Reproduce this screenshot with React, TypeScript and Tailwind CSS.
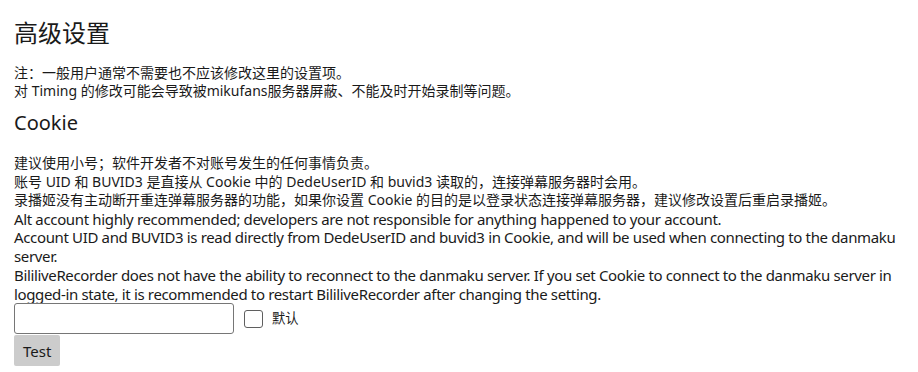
import { useState } from "react";

const AdvancedSettings = () => {
  const [cookie, setCookie] = useState("");
  const [useDefault, setUseDefault] = useState(false);

  return (
    <div
      className="min-h-screen bg-white px-[14px] pt-[17px] text-[#1a1a1a]"
      style={{ fontFamily: '"Noto Sans", "Noto Sans CJK SC", sans-serif' }}
    >
      <h1 className="text-[24px] leading-[32px] font-normal">高级设置</h1>

      <div className="mt-[15px] text-[14px] leading-[18px]">
        <div>注：一般用户通常不需要也不应该修改这里的设置项。</div>
        <div>对 Timing 的修改可能会导致被mikufans服务器屏蔽、不能及时开始录制等问题。</div>
      </div>

      <h2 className="mt-[9px] text-[20px] leading-[28px] font-normal">Cookie</h2>

      <div className="mt-[17px] pr-[4px]">
        <div className="text-[14px] leading-[18.5px]">
          <div>建议使用小号；软件开发者不对账号发生的任何事情负责。</div>
          <div>账号 UID 和 BUVID3 是直接从 Cookie 中的 DedeUserID 和 buvid3 读取的，连接弹幕服务器时会用。</div>
          <div>录播姬没有主动断开重连弹幕服务器的功能，如果你设置 Cookie 的目的是以登录状态连接弹幕服务器，建议修改设置后重启录播姬。</div>
        </div>
        <div className="text-[15px] leading-[18.75px] tracking-[-0.35px]">
          <div>Alt account highly recommended; developers are not responsible for anything happened to your account.</div>
          <div>
            Account UID and BUVID3 is read directly from DedeUserID and buvid3 in Cookie, and will be used when connecting to the danmaku server.
          </div>
          <div>
            BililiveRecorder does not have the ability to reconnect to the danmaku server. If you set Cookie to connect to the danmaku server in logged-in state, it is recommended to restart BililiveRecorder after changing the setting.
          </div>
        </div>
      </div>

      <div className="flex items-center">
        <input
          type="text"
          value={cookie}
          onChange={(e) => setCookie(e.target.value)}
          className="h-[31px] w-[220px] rounded-[3px] border border-[#767676] bg-white px-2 text-[14px] outline-none"
        />
        <label className="ml-[10px] flex items-center gap-[9px] text-[13.3px]">
          <span
            onClick={() => setUseDefault(!useDefault)}
            className="block h-[18px] w-[19px] rounded-[3px] border border-[#5f5f5f] bg-white"
          />
          默认
        </label>
      </div>

      <button className="mt-[1px] h-[31px] rounded-[2px] bg-[#cccccc] px-[9px] text-[15px] text-[#1a1a1a]">
        Test
      </button>
    </div>
  );
};

export default function App() {
  return <AdvancedSettings />;
}
